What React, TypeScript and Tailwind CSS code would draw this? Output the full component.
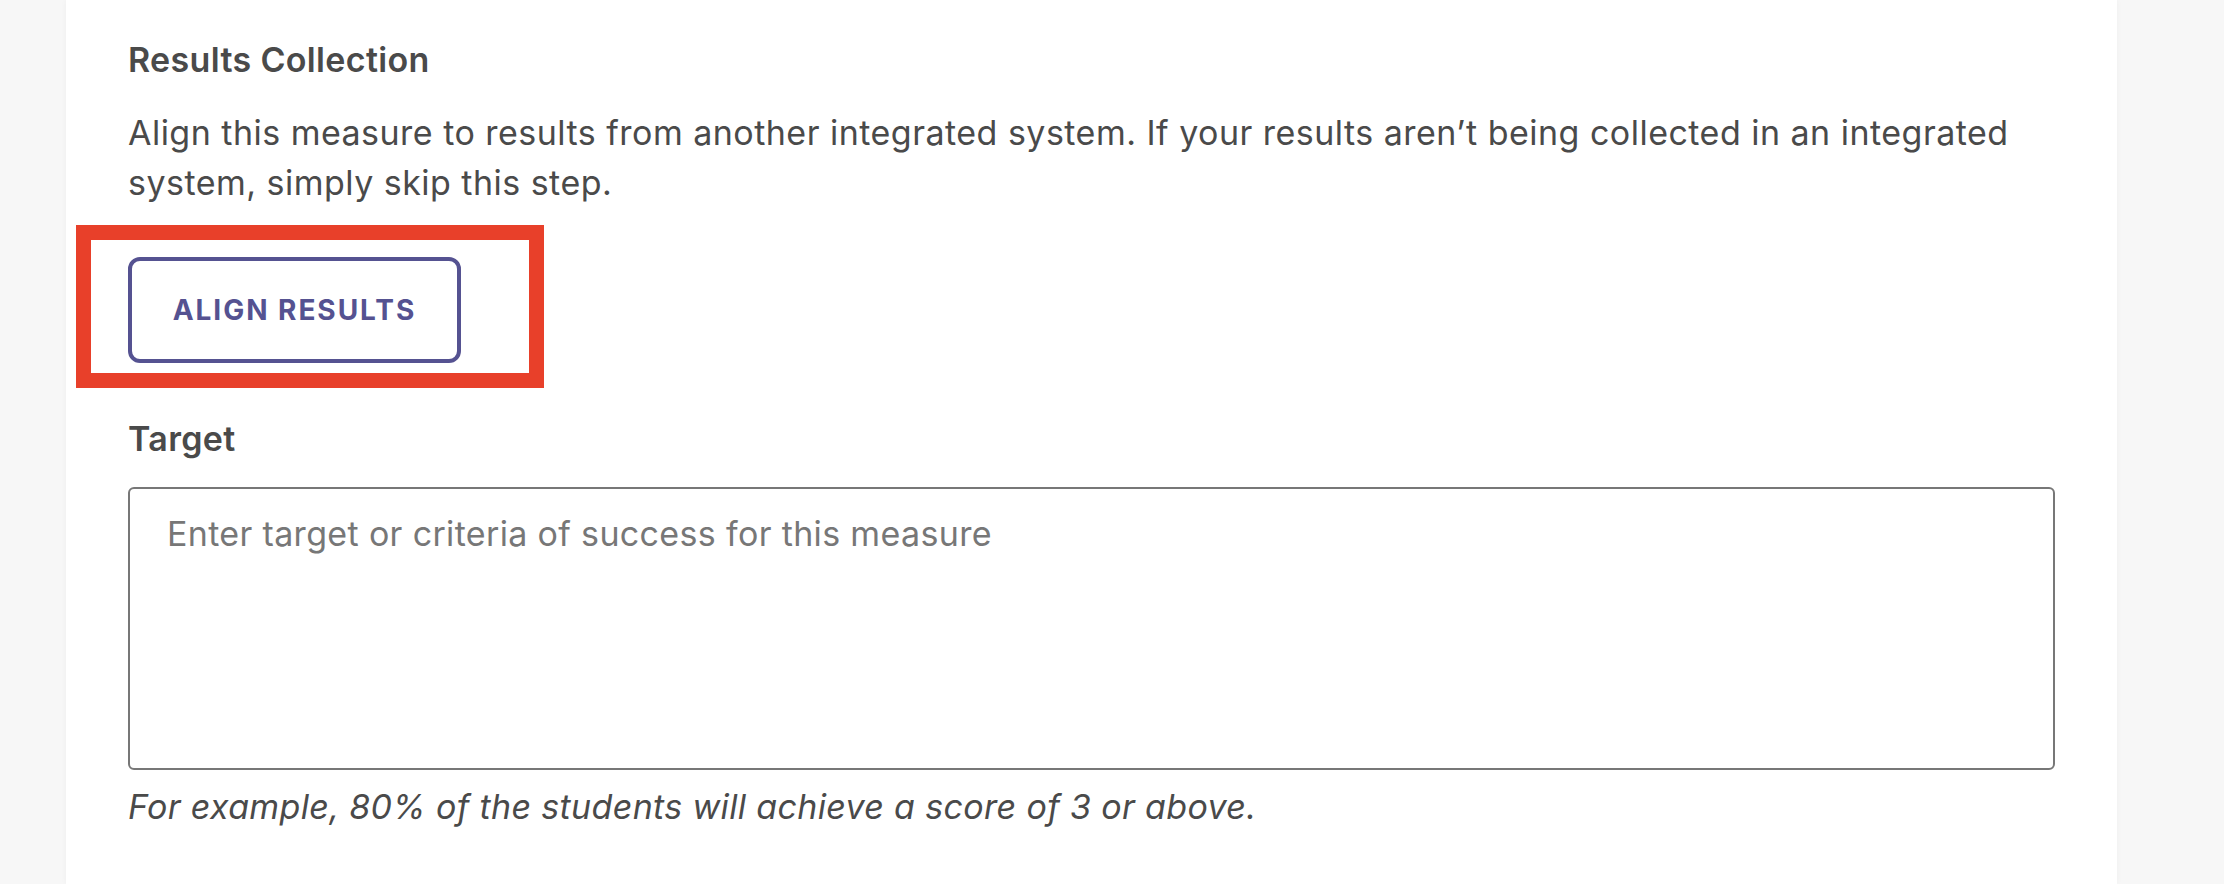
import { useState } from "react";

const PURPLE = "#555291";

const App = () => {
  const [target, setTarget] = useState("");

  return (
    <div className="min-h-[884px] w-full bg-[#f7f7f7] font-['Inter','Noto_Sans',sans-serif] text-[#4a4a4a]">
      <div className="ml-[66px] min-h-[884px] w-[2051px] bg-white px-[62px] pt-[40px] pb-[56px] shadow-[0_0_6px_rgba(0,0,0,0.04)]">
        {/* Results collection */}
        <h2 className="text-[34px] leading-[40px] font-semibold tracking-[0.01em]">Results Collection</h2>
        <p className="mt-[28px] text-[34px] leading-[50px] tracking-[0.014em]">
          Align this measure to results from another integrated system. If your results aren’t being collected in an
          integrated system, simply skip this step.
        </p>

        <div className="relative mt-[49px] w-fit">
          <button
            type="button"
            className="flex h-[106px] w-[333px] items-center justify-center rounded-[12px] border-4 border-[#555291] bg-white text-[28px] font-bold tracking-[0.07em] text-[#555291]"
            style={{ color: PURPLE }}
          >
            ALIGN RESULTS
          </button>
          {/* annotation box */}
          <div className="pointer-events-none absolute top-[-32px] left-[-52px] h-[163px] w-[468px] border-[15px] border-[#e8402a]" />
        </div>

        {/* Target */}
        <label htmlFor="target" className="mt-[56px] block text-[34px] leading-[40px] font-semibold tracking-[0.01em]">
          Target
        </label>
        <textarea
          id="target"
          value={target}
          onChange={(e) => setTarget(e.target.value)}
          placeholder="Enter target or criteria of success for this measure"
          className="mt-[28px] block h-[283px] w-full resize-none rounded-[6px] border-2 border-[#777777] px-[37px] py-[20px] text-[34px] leading-[50px] tracking-[0.01em] text-[#4a4a4a] outline-none placeholder:text-[#777777]"
        />
        <p className="mt-[17px] text-[34px] leading-[40px] tracking-[0.01em] italic">
          For example, 80% of the students will achieve a score of 3 or above.
        </p>
      </div>
    </div>
  );
};

export default App;
